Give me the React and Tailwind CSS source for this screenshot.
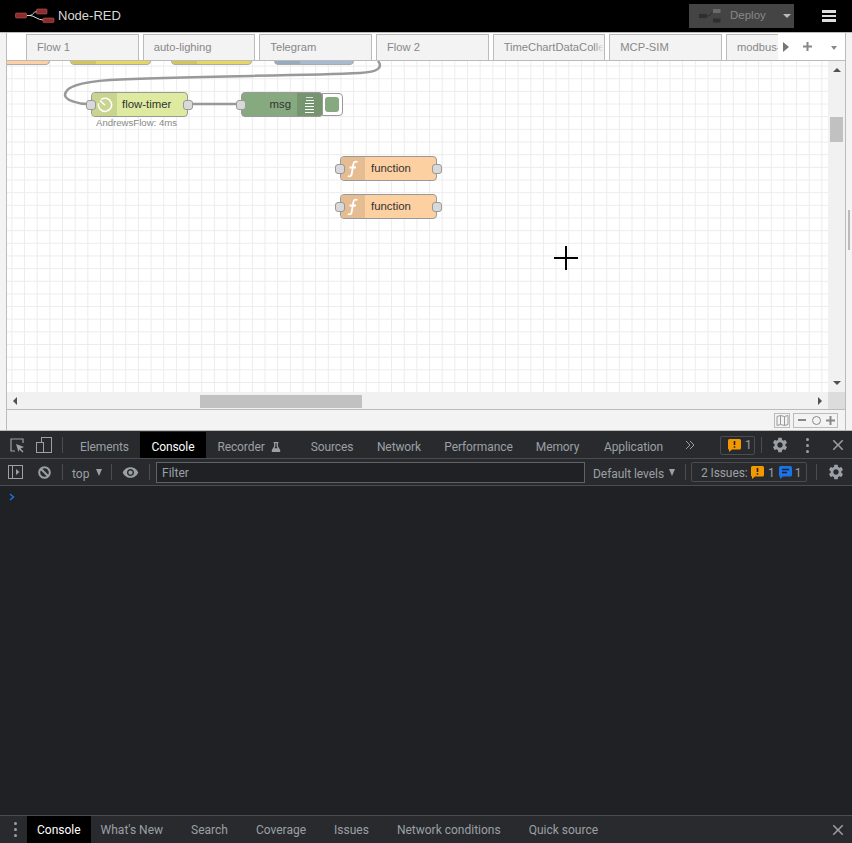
import React from "react";
import { MdSettings, MdVisibility, MdClose } from "react-icons/md";
import { FaFlask } from "react-icons/fa";

const flowTabs = ["Flow 1", "auto-lighing", "Telegram", "Flow 2", "TimeChartDataCollector", "MCP-SIM", "modbus-test"];
const devTabs = [
  { name: "Elements", w: "w-[71px]" },
  { name: "Console", w: "w-[66px]" },
  { name: "Recorder", w: "w-[93px]" },
  { name: "Sources", w: "w-[66px]" },
  { name: "Network", w: "w-[68px]" },
  { name: "Performance", w: "w-[91px]" },
  { name: "Memory", w: "w-[67px]" },
  { name: "Application", w: "w-[85px]" },
];
const drawerTabs = ["Console", "What's New", "Search", "Coverage", "Issues", "Network conditions", "Quick source"];

const Logo = () => (
  <svg width="40" height="16" viewBox="0 0 40 16">
    <path d="M12 7.5 H15 C18 7.5 18 3.5 22 3.5 H23 M15 7.5 C19 7.5 23 12 28 12" fill="none" stroke="#ddd" strokeWidth="1" />
    <rect x="0.5" y="5" width="11" height="5" rx="1" fill="#8f2b2b" stroke="#b85c5c" strokeWidth="0.6" />
    <rect x="21.5" y="1" width="10.5" height="5" rx="1" fill="#8f2b2b" stroke="#b85c5c" strokeWidth="0.6" />
    <rect x="28" y="10" width="11" height="4.6" rx="1" fill="#8f2b2b" stroke="#b85c5c" strokeWidth="0.6" />
  </svg>
);

const DeployIcon = () => (
  <svg width="22" height="14" viewBox="0 0 22 14">
    <rect x="0" y="5" width="8" height="4" fill="#2e2e2e" />
    <path d="M8 7 H10 L14 2.5" fill="none" stroke="#2e2e2e" strokeWidth="1" />
    <rect x="14" y="0" width="7.5" height="4" fill="#6a6a6a" />
    <rect x="14" y="9.5" width="7.5" height="4" fill="#2e2e2e" />
  </svg>
);

const Port = ({ className }) => (
  <div className={`absolute top-[6.5px] w-[10px] h-[10px] rounded-[3px] bg-[#d9d9d9] border border-[#999] ${className}`} />
);

const FnIcon = () => (
  <svg width="14" height="18" viewBox="0 0 14 18">
    <path d="M11.5 2 C8.5 0.8 7.6 2.5 7.2 5 L5.8 13.5 C5.4 16 4.4 17 1.8 16 M3.5 7.5 H10" fill="none" stroke="#fff" strokeWidth="1.8" />
  </svg>
);

const TimerIcon = () => (
  <svg width="16" height="16" viewBox="0 0 16 16">
    <path d="M4.2 2.4 A6.6 6.6 0 1 1 1.6 6.2" fill="none" stroke="#fff" strokeWidth="1.5" />
    <path d="M3 3.5 L8 8.2" fill="none" stroke="#fff" strokeWidth="1.5" />
  </svg>
);

const FunctionNode = ({ className }) => (
  <div className={`absolute left-[333px] w-[97px] h-[25px] rounded-[4px] bg-[#fdd0a2] border border-[#999] flex items-center ${className}`}>
    <div className="w-[24px] h-full rounded-l-[4px] bg-[#e6bc92] flex items-center justify-center">
      <FnIcon />
    </div>
    <span className="pl-[6px] text-[11.4px] text-[#333]">function</span>
    <Port className="left-[-6px]" />
    <Port className="right-[-6px]" />
  </div>
);

const CutNode = ({ className, dark }) => (
  <div className={`absolute top-[-20px] h-[24px] rounded-[4px] border border-[#aaa] overflow-hidden ${className}`}>
    <div className={`w-[25px] h-full ${dark}`} />
  </div>
);

const Canvas = () => (
  <div className="relative flex-1 overflow-hidden bg-white bg-[linear-gradient(to_right,#ececec_1px,transparent_1px),linear-gradient(to_bottom,#ececec_1px,transparent_1px)] bg-[size:12.67px_12.67px] bg-[position:4.4px_4.6px]">
    {/* nodes cut off by the tab bar */}
    <CutNode className="left-[-10px] w-[53px] bg-[#fdd0a2]" dark="bg-[#fdd0a2]" />
    <CutNode className="left-[63px] w-[81px] bg-[#e6d85f]" dark="bg-[#d3c659]" />
    <CutNode className="left-[164px] w-[81px] bg-[#e6d85f]" dark="bg-[#d3c659]" />
    <CutNode className="left-[267px] w-[80px] bg-[#a6bbcf]" dark="bg-[#98abbe]" />

    <svg className="absolute inset-0" width="821" height="331" viewBox="7 61 821 331">
      <path d="M378 61 C383 67 379 72 360 73 C300 76 180 76 110 80 C80 82 65 87 65 95 C65 100 78 104 88 104" fill="none" stroke="#999" strokeWidth="2.5" />
      <path d="M188 104 H241" fill="none" stroke="#999" strokeWidth="2.5" />
    </svg>

    {/* flow-timer */}
    <div className="absolute left-[84px] top-[31px] w-[97px] h-[25px] rounded-[4px] bg-[#deea9f] border border-[#999] flex items-center">
      <div className="w-[25px] h-full rounded-l-[4px] bg-[#c9d58f] flex items-center justify-center">
        <TimerIcon />
      </div>
      <span className="pl-[5px] text-[11.4px] text-[#333]">flow-timer</span>
      <Port className="left-[-6px]" />
      <Port className="right-[-6px]" />
    </div>
    <div className="absolute left-[89px] top-[56px] text-[9.6px] leading-[12px] text-[#888]">AndrewsFlow: 4ms</div>

    {/* debug node */}
    <div className="absolute left-[315px] top-[32px] w-[21px] h-[23px] rounded-r-[4px] bg-white border border-[#999] flex items-center justify-end pr-[3px]">
      <div className="w-[14px] h-[15px] rounded-[3px] bg-[#87a980]" />
    </div>
    <div className="absolute left-[234px] top-[31px] w-[82px] h-[25px] rounded-[4px] bg-[#87a980] border border-[#999] flex items-center">
      <span className="flex-1 text-right pr-[6px] text-[11.4px] text-[#333]">msg</span>
      <div className="w-[25px] h-full rounded-r-[4px] bg-[#76946f] flex flex-col items-center justify-center gap-[2px]">
        <div className="w-[7px] h-px bg-[#dfe7dc]" />
        <div className="w-[8px] h-px bg-[#eef2ec]" />
        <div className="w-[9px] h-px bg-white" />
        <div className="w-[9px] h-px bg-white" />
        <div className="w-[9px] h-px bg-white" />
        <div className="w-[9px] h-px bg-white" />
      </div>
      <Port className="left-[-6px]" />
    </div>

    <FunctionNode className="top-[95px]" />
    <FunctionNode className="top-[133px]" />

    {/* mouse cursor */}
    <svg className="absolute left-[547px] top-[185px]" width="24" height="24" viewBox="0 0 24 24">
      <path d="M0 12 H24 M12 0 V24" stroke="#000" strokeWidth="2" />
    </svg>
  </div>
);

const Workspace = () => (
  <div className="h-[398px] flex border-t border-[#bbb] bg-[#f3f3f3]">
    <div className="w-[7px] pl-[2px]">
      <div className="w-[5px] h-full bg-[#f3f3f3] border-r border-[#bbb]" />
    </div>
    <div className="flex-1 flex flex-col min-w-0 border-r border-[#bbb]">
      <div className="h-[28px] flex bg-white border-b border-[#bbb]">
        <div className="flex-1 min-w-0 overflow-hidden flex items-end pl-[19px] gap-[4px]">
          {flowTabs.map((t) => (
            <div key={t} className="relative shrink-0 w-[112.67px] h-[26px] px-[10px] bg-[#f3f3f3] border border-b-0 border-[#bbb] text-[11.2px] leading-[24px] text-[#888] overflow-hidden whitespace-nowrap">
              {t}
              <div className="absolute right-0 top-0 w-[10px] h-full bg-gradient-to-r from-transparent to-[#f3f3f3]" />
            </div>
          ))}
        </div>
        <div className="relative w-[67px] h-full bg-white flex items-center text-[#888]">
          <div className="ml-[5px] w-0 h-0 border-y-[5px] border-y-transparent border-l-[6px] border-l-[#777]" />
          <svg className="ml-[14px]" width="9" height="9" viewBox="0 0 9 9">
            <path d="M4.5 0 V9 M0 4.5 H9" stroke="#888" strokeWidth="2" />
          </svg>
          <div className="ml-[19px] mt-[2px] w-0 h-0 border-x-[3.5px] border-x-transparent border-t-[4px] border-t-[#888]" />
        </div>
      </div>
      <div className="h-[331px] flex">
        <Canvas />
        <div className="relative w-[17px] bg-[#f1f1f1] flex flex-col items-center justify-between py-[7px]">
          <div className="w-0 h-0 border-x-[4px] border-x-transparent border-b-[4px] border-b-[#505050]" />
          <div className="absolute left-[2px] top-[56px] w-[13px] h-[25px] bg-[#c1c1c1]" />
          <div className="w-0 h-0 border-x-[4px] border-x-transparent border-t-[4px] border-t-[#505050]" />
        </div>
      </div>
      <div className="relative h-[17px] flex items-center bg-[#f1f1f1]">
        <div className="ml-[6px] w-0 h-0 border-y-[4px] border-y-transparent border-r-[4px] border-r-[#505050]" />
        <div className="absolute left-[193px] top-[3px] w-[162px] h-[13px] bg-[#c1c1c1]" />
        <div className="ml-auto mr-[23px] w-0 h-0 border-y-[4px] border-y-transparent border-l-[4px] border-l-[#505050]" />
        <div className="absolute right-0 top-0 w-[17px] h-full bg-[#dcdcdc]" />
      </div>
      <div className="h-[21px] flex items-center justify-end gap-[3px] pr-[7px] bg-[#f3f3f3] border-t border-[#bbb]">
        <div className="w-[16px] h-[15px] bg-[#f3f3f3] border border-[#bbb] flex items-center justify-center">
          <svg width="13" height="11" viewBox="0 0 13 11">
            <path d="M1 1.5 L4.5 0.5 L8.5 1.5 L12 0.5 V9.5 L8.5 10.5 L4.5 9.5 L1 10.5 Z M4.5 0.5 V9.5 M8.5 1.5 V10.5" fill="none" stroke="#999" strokeWidth="1" />
          </svg>
        </div>
        <div className="h-[15px] flex bg-[#f3f3f3] border border-[#bbb]">
          <div className="w-[15px] flex items-center justify-center">
            <div className="w-[8px] h-[2px] bg-[#888]" />
          </div>
          <div className="w-[14px] flex items-center justify-center">
            <div className="w-[9px] h-[9px] rounded-full border border-[#888]" />
          </div>
          <div className="w-[14px] flex items-center justify-center">
            <svg width="9" height="9" viewBox="0 0 9 9">
              <path d="M4.5 0 V9 M0 4.5 H9" stroke="#888" strokeWidth="2" />
            </svg>
          </div>
        </div>
      </div>
    </div>
    <div className="relative w-[6px]">
      <div className="absolute left-[2px] top-[177px] w-[2px] h-[40px] bg-[#bbb]" />
    </div>
  </div>
);

const WarnIcon = ({ size = 13 }) => (
  <svg width={size} height={size} viewBox="0 0 13 13">
    <path d="M1.5 0 H11.5 A1.5 1.5 0 0 1 13 1.5 V9 A1.5 1.5 0 0 1 11.5 10.5 H4 L1 13 V10.5 A1 1 0 0 1 0 9.5 V1.5 A1.5 1.5 0 0 1 1.5 0 Z" fill="#f29900" />
    <path d="M6.5 2 V6 M6.5 7.2 V8.8" stroke="#202124" strokeWidth="1.6" />
  </svg>
);

const InfoIcon = () => (
  <svg width="13" height="13" viewBox="0 0 13 13">
    <path d="M1.5 0 H11.5 A1.5 1.5 0 0 1 13 1.5 V9 A1.5 1.5 0 0 1 11.5 10.5 H4 L1 13 V10.5 A1 1 0 0 1 0 9.5 V1.5 A1.5 1.5 0 0 1 1.5 0 Z" fill="#1a73e8" />
    <path d="M3 3.5 H10 M3 6.5 H8" stroke="#202124" strokeWidth="1.3" />
  </svg>
);

const Sep = ({ className }) => <div className={`w-px h-[16px] bg-[#4a4c50] ${className}`} />;

const Dots = ({ className }) => (
  <div className={`flex flex-col gap-[3px] ${className}`}>
    <div className="w-[3px] h-[3px] rounded-full bg-[#9aa0a6]" />
    <div className="w-[3px] h-[3px] rounded-full bg-[#9aa0a6]" />
    <div className="w-[3px] h-[3px] rounded-full bg-[#9aa0a6]" />
  </div>
);

const DevTools = () => (
  <div className="flex-1 flex flex-col bg-[#292a2d] border-t border-[#bbb] text-[12px] text-[#9aa0a6] font-['Roboto',sans-serif] min-h-0">
    <div className="h-[28px] pt-px flex items-center border-b border-[#4a4c50]">
      <svg className="ml-[10px]" width="15" height="15" viewBox="0 0 15 15">
        <path d="M5 13 H1 V1 H13 V5" fill="none" stroke="#9aa0a6" strokeWidth="1.2" />
        <path d="M6 6 L14 9 L10.5 10.5 L13.5 13.5 L12.5 14.5 L9.5 11.5 L8.5 14 Z" fill="#9aa0a6" />
      </svg>
      <svg className="ml-[11px]" width="16" height="16" viewBox="0 0 16 16">
        <rect x="5.5" y="0.5" width="10" height="15" fill="none" stroke="#9aa0a6" />
        <rect x="0.5" y="5.5" width="7" height="10" fill="#292a2d" stroke="#9aa0a6" />
      </svg>
      <Sep className="ml-[10px] mr-[6px]" />
      {devTabs.map((t) => (
        <div
          key={t.name}
          className={`h-[26px] pt-[3px] flex items-center justify-center whitespace-nowrap tracking-[-0.1px] ${t.w} ${t.name === "Console" ? "bg-black text-white" : ""} ${t.name === "Recorder" ? "pr-[7px]" : ""}`}
        >
          {t.name}
          {t.name === "Recorder" && <FaFlask className="ml-[6px] text-[10px]" />}
        </div>
      ))}
      <svg className="ml-[9px]" width="10" height="10" viewBox="0 0 10 10">
        <path d="M1 1 L5 5 L1 9 M5 1 L9 5 L5 9" fill="none" stroke="#9aa0a6" strokeWidth="1" />
      </svg>
      <div className="ml-[25px] w-[35px] h-[19px] flex items-center gap-[4px] pl-[7px] rounded-[2px] border border-[#4a4c50]">
        <WarnIcon />
        <span>1</span>
      </div>
      <Sep className="ml-[6px]" />
      <MdSettings className="ml-[9px] text-[18px]" />
      <Dots className="ml-[17px]" />
      <MdClose className="ml-[20px] text-[18px]" />
    </div>
    <div className="h-[27px] flex items-center border-b border-[#4a4c50]">
      <svg className="ml-[8px]" width="15" height="14" viewBox="0 0 15 14">
        <rect x="0.5" y="0.5" width="14" height="13" fill="none" stroke="#9aa0a6" />
        <path d="M4.5 0.5 V13.5" stroke="#9aa0a6" />
        <path d="M8 4 L11.5 7 L8 10 Z" fill="#9aa0a6" />
      </svg>
      <svg className="ml-[15px]" width="13" height="13" viewBox="0 0 13 13">
        <circle cx="6.5" cy="6.5" r="5.3" fill="none" stroke="#9aa0a6" strokeWidth="2" />
        <path d="M2.8 2.8 L10.2 10.2" stroke="#9aa0a6" strokeWidth="2" />
      </svg>
      <Sep className="ml-[11px]" />
      <span className="ml-[9px] w-[17px] pt-[3px]">top</span>
      <div className="ml-[7px] w-0 h-0 border-x-[3.5px] border-x-transparent border-t-[7px] border-t-[#9aa0a6]" />
      <Sep className="ml-[9px]" />
      <MdVisibility className="ml-[10px] text-[17px]" />
      <Sep className="ml-[10px]" />
      <div className="ml-[6px] w-[429px] h-[21px] flex items-center pl-[5px] pt-[2px] bg-[#202124] border border-[#5f6368]">Filter</div>
      <span className="ml-[8px] w-[71px] pt-[3px] whitespace-nowrap tracking-[-0.05px]">Default levels</span>
      <div className="ml-[5px] w-0 h-0 border-x-[3.5px] border-x-transparent border-t-[7px] border-t-[#9aa0a6]" />
      <Sep className="ml-[10px]" />
      <div className="ml-[5px] w-[116px] h-[20px] flex items-center pl-[9px] rounded-[2px] border border-[#4a4c50] whitespace-nowrap">
        <span className="w-[46px] pt-[2px] tracking-[-0.1px]">2 Issues:</span>
        <span className="ml-[4px]"><WarnIcon /></span>
        <span className="ml-[4px] pt-[2px]">1</span>
        <span className="ml-[4px]"><InfoIcon /></span>
        <span className="ml-[3px] pt-[2px]">1</span>
      </div>
      <Sep className="ml-[9px]" />
      <MdSettings className="ml-[10px] text-[18px]" />
    </div>
    <div className="flex-1 bg-[#202124] pl-[9px] pt-[7px]">
      <svg width="6" height="8" viewBox="0 0 6 8">
        <path d="M1 1 L4.5 4 L1 7" fill="none" stroke="#1a73e8" strokeWidth="1.5" />
      </svg>
    </div>
    <div className="h-[28px] flex items-center border-t border-[#4a4c50]">
      <Dots className="ml-[14px] mr-[10px]" />
      {drawerTabs.map((t, i) => (
        <div
          key={t}
          className={`h-full flex items-center whitespace-nowrap ${i === 0 ? "px-[10px] bg-black text-white" : "px-[14px]"} ${i === 1 ? "-ml-[4px]" : ""}`}
        >
          {t}
        </div>
      ))}
      <MdClose className="ml-auto mr-[5px] text-[18px]" />
    </div>
  </div>
);

export default function App() {
  return (
    <div className="w-[852px] h-[843px] flex flex-col overflow-hidden bg-black font-['Liberation_Sans',Arial,sans-serif]">
      <div className="h-[32px] flex items-center bg-black">
        <div className="ml-[15px]">
          <Logo />
        </div>
        <span className="ml-[3px] text-[#d8d8d8] text-[13px]">Node-RED</span>
        <div className="ml-auto w-[105px] h-[24px] flex items-center pl-[10px] bg-[#444]">
          <DeployIcon />
          <span className="ml-[9px] text-[#888] text-[11.5px]">Deploy</span>
          <div className="ml-[17px] w-0 h-0 border-x-[4px] border-x-transparent border-t-[4px] border-t-[#bbb]" />
        </div>
        <div className="ml-[28px] mr-[16px] w-[14px] flex flex-col gap-[2px]">
          <div className="h-[2.5px] bg-[#ddd]" />
          <div className="h-[2.5px] bg-[#ddd]" />
          <div className="h-[2.5px] bg-[#ddd]" />
        </div>
      </div>
      <Workspace />
      <DevTools />
    </div>
  );
}
